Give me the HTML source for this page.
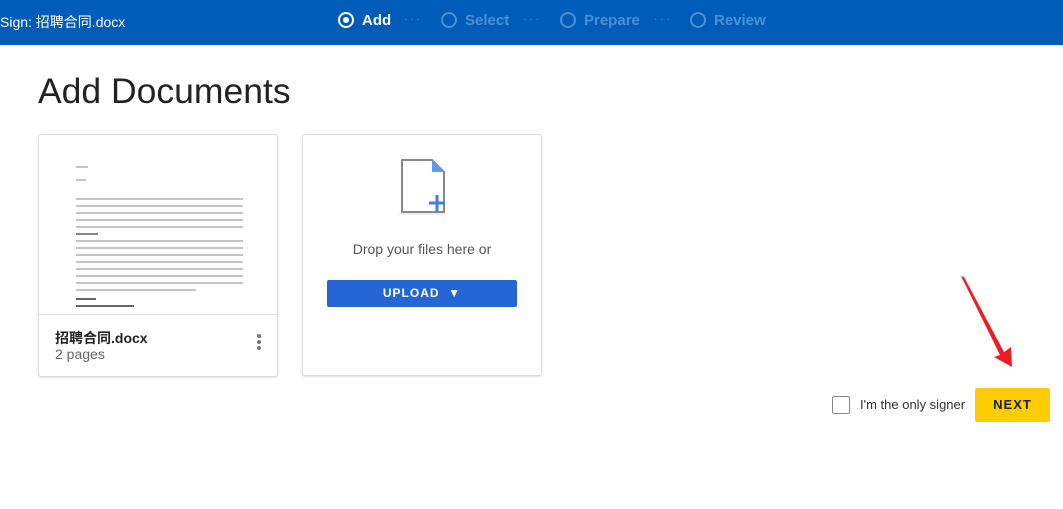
<!DOCTYPE html>
<html><head><meta charset="utf-8"><style>
*{margin:0;padding:0;box-sizing:border-box}
body{width:1063px;height:509px;background:#fff;font-family:"Liberation Sans","Noto Sans CJK SC",sans-serif;position:relative;overflow:hidden}
.hdr{position:absolute;left:0;top:0;width:1063px;height:45px;background:#005cb9}
.title{position:absolute;left:0;top:12px;color:#fff;font-size:14px}
.step{position:absolute;top:12px;font-size:15px;font-weight:bold;color:#4d8fd6}
.circ{position:absolute;top:12px;width:16px;height:16px;border:2px solid #4d8fd6;border-radius:50%}
.dots{position:absolute;top:14px;color:#4d8fd6;font-size:10px;letter-spacing:3px}
h1{position:absolute;left:38px;top:71px;font-size:35.5px;font-weight:normal;color:#222}
.card{position:absolute;border:1px solid #ddd;border-radius:3px;box-shadow:0 1px 2px rgba(0,0,0,.12);background:#fff}
.ln{position:absolute;height:2px;background:#c4c4c4;left:37px;width:167px}
.b{background:#666}
</style></head><body>
<div class="hdr">
<div class="title">Sign: 招聘合同.docx</div>
<div class="circ" style="left:338px;border-color:#fff"><div style="position:absolute;left:3px;top:3px;width:6px;height:6px;border-radius:50%;background:#fff"></div></div>
<div class="step" style="left:362px;color:#fff">Add</div>
<div class="dots" style="left:404px">···</div>
<div class="circ" style="left:441px"></div>
<div class="step" style="left:465px">Select</div>
<div class="dots" style="left:523px">···</div>
<div class="circ" style="left:560px"></div>
<div class="step" style="left:584px">Prepare</div>
<div class="dots" style="left:654px">···</div>
<div class="circ" style="left:690px"></div>
<div class="step" style="left:714px">Review</div>
</div>
<h1>Add Documents</h1>
<div class="card" style="left:38px;top:134px;width:240px;height:243px">
<div class="ln" style="top:31px;width:12px"></div>
<div class="ln" style="top:44px;width:10px"></div>
<div class="ln" style="top:63px"></div>
<div class="ln" style="top:70px"></div>
<div class="ln" style="top:77px"></div>
<div class="ln" style="top:84px"></div>
<div class="ln" style="top:91px"></div>
<div class="ln" style="top:98px;width:22px;background:#888"></div>
<div class="ln" style="top:105px"></div>
<div class="ln" style="top:112px"></div>
<div class="ln" style="top:119px"></div>
<div class="ln" style="top:126px"></div>
<div class="ln" style="top:133px"></div>
<div class="ln" style="top:140px"></div>
<div class="ln" style="top:147px"></div>
<div class="ln" style="top:154px;width:120px"></div>
<div class="ln b" style="top:163px;width:20px"></div>
<div class="ln b" style="top:170px;width:58px"></div>
<div style="position:absolute;left:0;top:179px;width:238px;border-top:1px solid #e4e4e4"></div>
<div style="position:absolute;left:16px;top:193px;font-size:14px;font-weight:bold;color:#222">招聘合同.docx</div>
<div style="position:absolute;left:16px;top:211px;font-size:14px;color:#666">2 pages</div>
<div style="position:absolute;left:218px;top:199px;width:4px">
<div style="width:4px;height:4px;border-radius:50%;background:#777;margin-bottom:2px"></div>
<div style="width:4px;height:4px;border-radius:50%;background:#777;margin-bottom:2px"></div>
<div style="width:4px;height:4px;border-radius:50%;background:#777"></div></div>
</div>
<div class="card" style="left:302px;top:134px;width:240px;height:242px">
<svg style="position:absolute;left:96px;top:22px" width="50" height="60" viewBox="0 0 50 60">
<path d="M3 3 H33 L45 15 V55 H3 Z" fill="#fff" stroke="#888" stroke-width="2"/>
<path d="M33 3 L45 15 H33 Z" fill="#5a9cf0"/>
<path d="M38 38 V55 M30 46 H46" stroke="#3d82e3" stroke-width="3"/>
<line x1="0" y1="57" x2="46" y2="57" stroke="#ddd" stroke-width="1"/>
</svg>
<div style="position:absolute;left:0;width:238px;top:106px;text-align:center;font-size:14px;color:#555">Drop your files here or</div>
<div style="position:absolute;left:24px;top:145px;width:190px;height:27px;background:#2566d4;border-radius:2px;color:#fff;font-weight:bold;font-size:12px;letter-spacing:1px;text-align:center;line-height:27px">UPLOAD &nbsp;▼</div>
</div>
<svg style="position:absolute;left:0;top:0" width="1063" height="509">
<polygon points="961,276 964,277 1004,352 1011,347 1012,367 994,357 1000,355" fill="#ee1c24"/>
</svg>
<div style="position:absolute;left:832px;top:396px;width:18px;height:18px;border:1px solid #888;border-radius:2px"></div>
<div style="position:absolute;left:860px;top:397px;font-size:13px;color:#333">I'm the only signer</div>
<div style="position:absolute;left:975px;top:388px;width:75px;height:34px;background:#fccd00;border-radius:2px;font-weight:bold;font-size:13px;letter-spacing:1px;text-align:center;line-height:34px;color:#222">NEXT</div>
</body></html>
